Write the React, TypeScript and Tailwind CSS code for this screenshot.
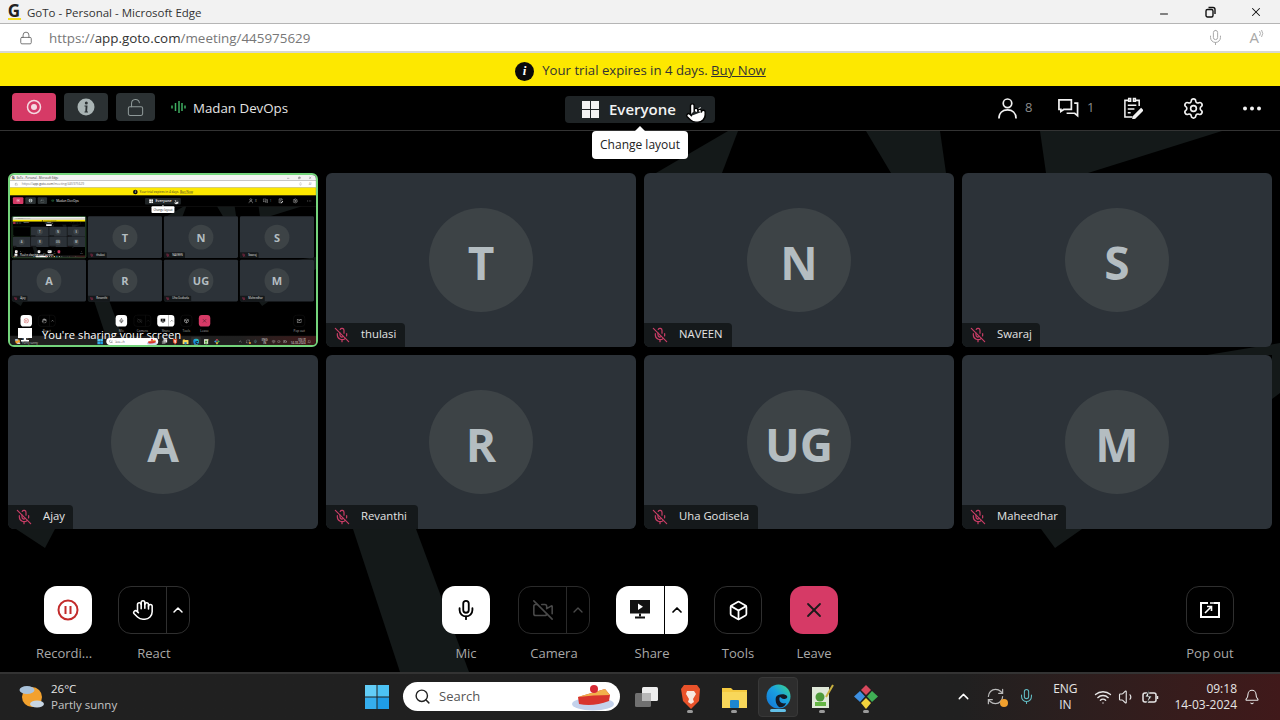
import React from "react";
import { Bell, Box, ChevronDown, ChevronUp, Hand, LockOpen, Lock, Mic, MicOff, Minus, Pointer, RefreshCw, Search, Settings, Volume1, VideoOff, Wifi, X } from "lucide-react";

const people = [
  { i: "T", n: "thulasi", w: "w-[79px]" },
  { i: "N", n: "NAVEEN", w: "w-[88px]" },
  { i: "S", n: "Swaraj", w: "w-[78px]" },
  { i: "A", n: "Ajay", w: "w-[65px]" },
  { i: "R", n: "Revanthi", w: "w-[92px]" },
  { i: "UG", n: "Uha Godisela", w: "w-[114px]" },
  { i: "M", n: "Maheedhar", w: "w-[104px]" },
];

function Background() {
  return (
    <svg className="absolute inset-0 w-full h-full" viewBox="0 0 1280 541" fill="#141919">
      <polygon points="728,0 738,0 722,42 656,42" />
      <polygon points="866,0 940,0 946,42 891,42" />
      <polygon points="1040,0 1222,0 1088,42 1046,42" />
      <polygon points="1207,224 1280,212 1280,262 1272,268 1272,224" />
      <polygon points="353,398 416,398 469,541 400,541" />
      <polygon points="16,398 55,398 45,417" />
      <polygon points="1041,398 1082,398 1055,417" />
    </svg>
  );
}

function TitleBar() {
  return (
    <div className="h-6 shrink-0 bg-[#f2f2f2] border-b border-[#b5b5b5] flex items-center pl-[7px] pr-[17px] text-[#333]">
      <div className="w-[14px] flex flex-col items-center">
        <span className="text-[17px] leading-[14px] font-bold text-[#222]">G</span>
        <span className="w-[13px] h-[2px] bg-[#f5dc1e]" />
      </div>
      <span className="ml-[6px] mt-[2px] text-[11.500px] whitespace-nowrap">GoTo - Personal - Microsoft Edge</span>
      <div className="ml-auto flex items-center gap-[35px] text-[#111]">
        <Minus size={12} strokeWidth={2} className="mt-[4px]" />
        <svg width="11" height="12" viewBox="0 0 11 12" fill="none" stroke="currentColor" strokeWidth="1.400">
          <rect x="1" y="3.500" width="7" height="7.500" rx="1.500" />
          <path d="M3.500 1.500h4.500a2 2 0 0 1 2 2V8" />
        </svg>
        <X size={14} strokeWidth={1.800} className="-ml-[2px]" />
      </div>
    </div>
  );
}

function AddressBar() {
  return (
    <div className="h-[29px] shrink-0 bg-white border-b-2 border-[#d8d8d0] flex items-center pl-[19px] pr-[16px]">
      <Lock size={14} strokeWidth={1.500} className="text-[#666]" />
      <div className="ml-[16px] mt-[1px] text-[13.400px] text-[#777] whitespace-nowrap">
        https://<span className="text-[#333]">app.goto.com</span>/meeting/445975629
      </div>
      <div className="ml-auto flex items-center gap-[26px] text-[#a8a8a8]">
        <Mic size={17} strokeWidth={1.400} />
        <div className="flex items-start">
          <span className="text-[15px] leading-none">A</span>
          <svg width="5" height="8" viewBox="0 0 5 8" fill="none" stroke="currentColor" strokeWidth="0.900"><path d="M0.500 1a4 4 0 0 1 0 5M2.500 0a6 6 0 0 1 0 7" /></svg>
        </div>
      </div>
    </div>
  );
}

function Banner() {
  return (
    <div className="h-[33px] shrink-0 bg-[#fde800] flex items-center justify-center pt-[3px] pl-[1px] text-[13.200px] text-[#333]">
      <span className="w-[19px] h-[19px] rounded-full bg-[#0a0a0a] text-white flex items-center justify-center text-[13px] font-bold font-['Liberation_Serif',serif] italic">i</span>
      <span className="ml-2 whitespace-nowrap">Your trial expires in 4 days. <span className="underline">Buy Now</span></span>
    </div>
  );
}

function Header() {
  return (
    <div className="h-[45px] shrink-0 bg-black border-b border-[#333] flex items-center relative z-10 text-white pl-3 pr-[18px]">
      <div className="flex items-center gap-2 w-[553px] pb-[2px]">
        <div className="w-[44px] h-[28px] rounded bg-[#d63a66] flex items-center justify-center">
          <svg width="16" height="16" viewBox="0 0 16 16"><circle cx="8" cy="8" r="6.500" fill="none" stroke="#f4d9e1" strokeWidth="1.500" /><circle cx="8" cy="8" r="3" fill="#f4d9e1" /></svg>
        </div>
        <div className="w-[44px] h-[28px] rounded bg-[#2b3133] flex items-center justify-center">
          <svg width="18" height="18" viewBox="0 0 18 18"><circle cx="9" cy="9" r="8.500" fill="#a9b4b4" /><circle cx="9.300" cy="5" r="1.500" fill="#2b3133" /><path d="M7.500 7.500h3l-.4 6H11v1H7.500v-1h.8l.3-5h-1.100z" fill="#2b3133" /></svg>
        </div>
        <div className="w-[39px] h-[28px] rounded bg-[#2b3133] flex items-center justify-center">
          <LockOpen size={19} strokeWidth={1.300} className="text-[#8f9999]" />
        </div>
        <svg className="ml-2" width="15" height="12" viewBox="0 0 15 12" stroke="#3fae62" strokeWidth="1.500">
          <path d="M1 4.500v3M4.500 2v8M8 0v12M11 2v8M14 4.500v3" />
        </svg>
        <span className="ml-[-1px] mt-[4px] text-[13.300px] text-[#e4e4e4] whitespace-nowrap">Madan DevOps</span>
      </div>
      <div className="relative w-[150px] h-[27px] mt-[2px] rounded bg-[#1f2426] flex items-center pl-[17px]">
        <svg width="17" height="17" viewBox="0 0 17 17" fill="#f2f2f2"><rect width="8" height="8" /><rect x="9" width="8" height="8" /><rect y="9" width="8" height="8" /><rect x="9" y="9" width="8" height="8" /></svg>
        <span className="ml-[10px] text-[15px] font-semibold text-[#f2f2f2]">Everyone</span>
        <ChevronDown size={15} strokeWidth={2} className="ml-[13px] text-[#ddd]" />
        <Pointer size={22} strokeWidth={1.500} fill="white" className="absolute left-[120px] top-[6px] text-black" />
        <div className="absolute left-[27px] top-[35px] w-[96px] h-[28px] bg-white rounded text-[#222] text-[12px] font-medium flex items-center justify-center whitespace-nowrap">
          <span className="absolute left-[43px] top-[-5px] w-0 h-0 border-x-[5px] border-x-transparent border-b-[5px] border-b-white" />
          Change layout
        </div>
      </div>
      <div className="ml-auto flex items-center text-[#f2f2f2]">
        <svg width="19" height="23" viewBox="0 0 20 23" fill="none" stroke="currentColor" strokeWidth="1.800"><circle cx="10" cy="6" r="4.500" /><path d="M1 22c0-6 4-9 9-9s9 3 9 9" /></svg>
        <span className="ml-[8px] w-[33px] text-[13px] text-[#8a8a8a]">8</span>
        <svg width="21" height="20" viewBox="0 0 22 20" fill="none" stroke="currentColor" strokeWidth="1.800"><path d="M1 1.500h13v10H6l-3 2v-2H1z" /><path d="M17 5h3.500v13l-3-2.500H9" /></svg>
        <span className="ml-[8px] w-[36px] text-[13px] text-[#8a8a8a]">1</span>
        <svg width="20" height="22" viewBox="0 0 21 22" fill="none" stroke="currentColor" strokeWidth="1.600"><path d="M17 9V3h-4M6 3H2v17.500h8" /><path d="M6 1h2v3H6zM11 1h2v3h-2z" /><path d="M5 8h9M5 12h7M5 16h3" /><path d="M11 20l8-8 1.500 1.500-8 8-2 .5z" fill="currentColor" /></svg>
        <Settings size={23} strokeWidth={1.700} className="ml-[39px]" />
        <svg className="ml-[37px]" width="20" height="5" viewBox="0 0 20 5" fill="currentColor"><circle cx="3" cy="2.500" r="2" /><circle cx="10" cy="2.500" r="2" /><circle cx="17" cy="2.500" r="2" /></svg>
      </div>
    </div>
  );
}

function Tile({ p }: { p: (typeof people)[number] }) {
  return (
    <div className="relative h-[174px] rounded-md bg-[#2c3238] flex items-center justify-center">
      <div className="w-[104px] h-[104px] rounded-full bg-[#3d4346] flex items-center justify-center pt-[4px] text-[#b4bdc1] text-[46px] font-bold">{p.i}</div>
      <div className={`absolute left-0 bottom-0 ${p.w} h-[24px] pb-[1px] bg-[#15191b] rounded-tr rounded-bl-md flex items-center pl-[8px]`}>
        <MicOff size={16} strokeWidth={1.800} className="text-[#c93d66] shrink-0" />
        <span className="ml-[11px] text-[11.300px] text-[#e4e4e4] whitespace-nowrap">{p.n}</span>
      </div>
    </div>
  );
}

function SelfTile({ depth }: { depth: number }) {
  return (
    <div className="relative h-[174px] rounded-md bg-black border-2 border-[#74d47c] overflow-hidden">
      {depth < 2 && (
        <div className="absolute left-0 top-0 w-[1280px] h-[720px] origin-top-left scale-[0.239]">
          <Screen depth={depth + 1} />
        </div>
      )}
      <div className="absolute left-[8px] bottom-[3px] flex items-center text-white">
        <svg width="14" height="14" viewBox="0 0 14 14" fill="white"><rect width="14" height="10" /><rect x="6" y="10" width="2" height="2" /><rect x="3" y="12" width="8" height="1.500" /></svg>
        <span className="ml-[10px] text-[11.200px] leading-[14px] whitespace-nowrap">You're sharing your screen</span>
      </div>
    </div>
  );
}

function Tool({ label, w, className = "", labelClass = "", children }: { label: string; w: string; className?: string; labelClass?: string; children: React.ReactNode }) {
  return (
    <div className={`flex flex-col items-center ${w}`}>
      <div className={`h-12 w-full rounded-[13px] flex items-stretch ${className}`}>{children}</div>
      <span className={`mt-[10px] text-[13px] leading-[19px] text-[#a8a8a8] whitespace-nowrap ${labelClass}`}>{label}</span>
    </div>
  );
}

const dark = "border border-[#2f2f2f] text-white";
const cell = "w-[47px] flex items-center justify-center";
const arrow = "flex-1 flex items-center justify-center border-l";

function Toolbar() {
  return (
    <div className="mt-auto h-[86px] shrink-0 relative flex items-start pl-11 pr-[46px]">
      <div className="w-[398px] flex gap-[26px]">
        <Tool label="Recordi..." w="w-12" labelClass="-ml-2" className="bg-white text-[#c22b2b]">
          <div className="w-12 flex items-center justify-center">
            <svg width="22" height="22" viewBox="0 0 22 22" fill="none" stroke="currentColor" strokeWidth="2"><circle cx="11" cy="11" r="9.500" /><path d="M8.500 7v8M13.500 7v8" /></svg>
          </div>
        </Tool>
        <Tool label="React" w="w-[72px]" className={dark}>
          <div className={cell}><Hand size={22} strokeWidth={1.700} /></div>
          <div className={`${arrow} border-[#2f2f2f]`}><ChevronUp size={16} strokeWidth={2.200} /></div>
        </Tool>
      </div>
      <div className="w-[396px] flex">
        <Tool label="Mic" w="w-12" className="bg-white text-black">
          <div className="w-12 flex items-center justify-center"><Mic size={22} strokeWidth={2} /></div>
        </Tool>
        <div className="ml-[28px]">
          <Tool label="Camera" w="w-[72px]" className="border border-[#2a2a2a] text-[#4a4a4a]">
            <div className={cell}><VideoOff size={22} strokeWidth={1.700} /></div>
            <div className={`${arrow} border-[#2a2a2a]`}><ChevronUp size={16} strokeWidth={2} /></div>
          </Tool>
        </div>
        <div className="ml-[26px]">
          <Tool label="Share" w="w-[72px]" className="bg-white text-black">
            <div className="w-12 flex items-center justify-center">
              <svg width="22" height="20" viewBox="0 0 22 20"><rect x="1" y="0" width="20" height="13.500" fill="#111" /><path d="M9 3.500l5 3.200-5 3.200z" fill="white" /><rect x="10" y="13.500" width="2" height="3" fill="#111" /><rect x="6" y="16.500" width="10" height="2" fill="#111" /></svg>
            </div>
            <div className={`${arrow} border-black`}><ChevronUp size={16} strokeWidth={2.600} /></div>
          </Tool>
        </div>
        <div className="ml-[26px]">
          <Tool label="Tools" w="w-12" className={dark}>
            <div className="w-[46px] flex items-center justify-center"><Box size={21} strokeWidth={2} /></div>
          </Tool>
        </div>
        <div className="ml-[28px]">
          <Tool label="Leave" w="w-12" className="bg-[#d63a66] text-[#1a1a1a]">
            <div className="w-12 flex items-center justify-center"><X size={24} strokeWidth={1.800} /></div>
          </Tool>
        </div>
      </div>
      <div className="ml-auto">
        <Tool label="Pop out" w="w-12" className={dark}>
          <div className="w-[46px] flex items-center justify-center">
            <svg width="20" height="16" viewBox="0 0 20 16" fill="none" stroke="white" strokeWidth="2"><path d="M8 1H1v14h18V1h-5" /><path d="M10 1h10" strokeWidth="1.500" /><path d="M5 11l6-6M7 4.500h4.500V9" strokeWidth="1.600" /></svg>
          </div>
        </Tool>
      </div>
    </div>
  );
}

function Weather() {
  return (
    <svg width="25" height="26" viewBox="0 0 25 26">
      <circle cx="13" cy="13" r="10" fill="#f2a12e" />
      <ellipse cx="8" cy="6" rx="7.500" ry="4" fill="#a9c2da" />
      <ellipse cx="18" cy="20" rx="7" ry="3.500" fill="#c8d6e4" />
    </svg>
  );
}

function Pie() {
  return (
    <svg width="44" height="28" viewBox="0 0 44 28">
      <ellipse cx="22" cy="21" rx="21" ry="6.500" fill="#c4d2ec" />
      <path d="M7 14 L34 6 L39 12 L38 18 Q22 24 8 21z" fill="#d8352e" />
      <path d="M7 14 L34 6 L39 12 Q22 12 7 14z" fill="#f2b04c" />
      <circle cx="23" cy="6" r="4" fill="#d62b36" />
    </svg>
  );
}

function Edge() {
  return (
    <svg width="25" height="25" viewBox="0 0 25 25">
      <defs>
        <linearGradient id="edgeg" x1="0" y1="1" x2="1" y2="0"><stop offset="0" stopColor="#1273d6" /><stop offset="0.550" stopColor="#1aa0e0" /><stop offset="1" stopColor="#3ddc84" /></linearGradient>
      </defs>
      <circle cx="12.500" cy="12.500" r="12" fill="url(#edgeg)" />
      <path d="M10 13c1-3 9-4 11-1 1 2-1 3-3 3-2 0-2-1-4-2-1 1-1 5 2 6 1 .5 3 .5 4 0-1 4-5 5-7 4-3-2-4-7-3-10z" fill="#141a26" />
    </svg>
  );
}

function Dot({ active }: { active?: boolean }) {
  return <span className={`absolute bottom-[4px] left-1/2 -translate-x-1/2 rounded-sm h-[3px] ${active ? "w-4 bg-[#62c0e8]" : "w-[6px] bg-[#9a9a9a]"}`} />;
}

function Taskbar() {
  return (
    <div className="h-[48px] shrink-0 border-t-2 border-[#333] bg-linear-to-r from-[#202020] from-75% to-[#40191a] flex items-center pb-[1px] text-[#e6e6e6]">
      <div className="w-[365px] pl-[19px] flex items-center shrink-0">
        <Weather />
        <div className="ml-[7px] flex flex-col text-[11.500px] leading-[16px]">
          <span>26°C</span>
          <span className="text-[#c4c4c4]">Partly sunny</span>
        </div>
      </div>
      <svg width="24" height="24" viewBox="0 0 24 24"><rect width="11.500" height="11.500" fill="#62cdf7" /><rect x="12.500" width="11.500" height="11.500" fill="#4cc2f4" /><rect y="12.500" width="11.500" height="11.500" fill="#35aeee" /><rect x="12.500" y="12.500" width="11.500" height="11.500" fill="#1f9ce6" /></svg>
      <div className="ml-[14px] w-[217px] h-[29px] rounded-full bg-white flex items-center pl-[11px] pr-[5px] text-[#555]">
        <Search size={17} strokeWidth={2} className="text-[#222]" />
        <span className="ml-[8px] text-[13px]">Search</span>
        <span className="ml-auto flex"><Pie /></span>
      </div>
      <div className="ml-[4px] flex">
        <div className="relative w-11 h-10 flex items-center justify-center">
          <svg width="25" height="22" viewBox="0 0 25 22"><rect x="8" y="1" width="16" height="14" rx="1.500" fill="#eeeeee" /><rect x="1" y="7" width="16" height="14" rx="1.500" fill="#707070" /><rect x="8" y="7" width="9" height="8" fill="#b8b8b8" /></svg>
        </div>
        <div className="relative w-11 h-10 flex items-center justify-center">
          <svg width="21" height="26" viewBox="0 0 21 26"><path d="M4 1h13l3 4-1 12-8 8-8-8L1 5z" fill="#e8522a" /><path d="M7 7h7l2 3-3 5 1 3-3 2-3-2 1-3-3-5z" fill="#f7e8e0" /></svg>
          <Dot />
        </div>
        <div className="relative w-11 h-10 flex items-center justify-center">
          <svg width="25" height="22" viewBox="0 0 25 22"><path d="M0 2h9l2 2h14v18H0z" fill="#f4c93f" /><rect x="0" y="6" width="25" height="16" fill="#f8d75a" /><rect x="8" y="14" width="9" height="8" rx="1" fill="#1d86cf" /></svg>
          <Dot />
        </div>
        <div className="relative w-10 mx-[2px] h-10 flex items-center justify-center rounded bg-[#2d2d2d] border border-[#383838]">
          <Edge />
          <Dot active />
        </div>
        <div className="relative w-11 h-10 flex items-center justify-center">
          <svg width="23" height="25" viewBox="0 0 23 25"><rect x="1" y="3" width="17" height="21" fill="#dfe8d8" /><circle cx="9" cy="13" r="4.500" fill="#4d9a3a" /><rect x="4" y="18" width="11" height="4" fill="#65b545" /><path d="M22 1l-7 12" stroke="#c8b040" strokeWidth="2" /></svg>
          <Dot />
        </div>
        <div className="relative w-11 h-10 flex items-center justify-center">
          <svg width="26" height="26" viewBox="0 0 26 26"><path d="M13 1l5 5-5 5-5-5z" fill="#d8485c" /><path d="M7 7l5 5.500L7 18l-6-5.500z" fill="#3d8fe0" /><path d="M19 7l6 5.500L19 18l-5-5.500z" fill="#3fae55" /><path d="M13 14l5 5-5 6-5-6z" fill="#f2d23c" /></svg>
          <Dot />
        </div>
      </div>
      <div className="ml-auto pr-[20px] flex items-center">
        <ChevronUp size={17} strokeWidth={2} className="text-white" />
        <span className="relative ml-[14px] flex">
          <RefreshCw size={19} strokeWidth={1.500} className="text-[#bbb]" />
          <span className="absolute right-[-3px] bottom-[-1px] w-2 h-2 rounded-full bg-[#f2a12e]" />
        </span>
        <Mic size={17} strokeWidth={1.500} className="ml-[13px] text-[#62bcc4]" />
        <div className="ml-[13px] w-[34px] flex flex-col items-center text-[12px] leading-[16px]"><span>ENG</span><span>IN</span></div>
        <Wifi size={18} strokeWidth={1.800} className="ml-[12px]" />
        <Volume1 size={18} strokeWidth={1.500} className="ml-[6px]" />
        <svg className="ml-[6px]" width="17" height="14" viewBox="0 0 17 14" fill="none" stroke="currentColor" strokeWidth="1.500">
          <rect x="1" y="3" width="13" height="9" rx="2" />
          <path d="M15.500 6v3" />
          <path d="M7 0L3 7h3.500L5 13l5-7H6.500z" fill="currentColor" stroke="#202020" strokeWidth="0.800" />
        </svg>
        <div className="ml-[15px] flex flex-col items-end text-[12px] leading-[16px] whitespace-nowrap"><span>09:18</span><span>14-03-2024</span></div>
        <Bell size={16} strokeWidth={1.600} className="ml-[7px]" />
      </div>
    </div>
  );
}

function Screen({ depth }: { depth: number }) {
  return (
    <div className="w-[1280px] h-[720px] overflow-hidden flex flex-col bg-black font-['Open_Sans','Noto_Sans',sans-serif]">
      <TitleBar />
      <AddressBar />
      <Banner />
      <Header />
      <div className="relative flex-1 flex flex-col bg-black">
        <Background />
        <div className="relative grid grid-cols-4 gap-2 px-2 pt-[42px]">
          <SelfTile depth={depth} />
          {people.map((p) => <Tile key={p.n} p={p} />)}
        </div>
        <Toolbar />
      </div>
      <Taskbar />
    </div>
  );
}

export default function App() {
  return <Screen depth={0} />;
}
